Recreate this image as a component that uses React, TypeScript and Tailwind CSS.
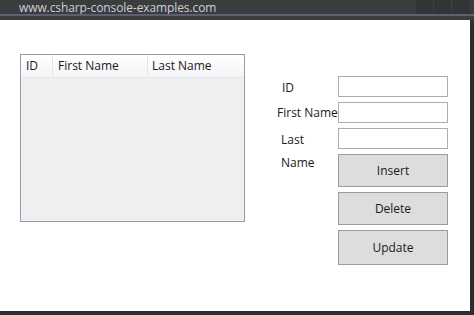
function App() {
  const font = { fontFamily: '"Open Sans", "Noto Sans", sans-serif' };

  return (
    <div
      className="w-[474px] h-[315px] bg-[#2d2e31] flex flex-col overflow-hidden text-[#1a1a1a]"
      style={font}
    >
      {/* title bar */}
      <div className="h-[20px] bg-[#3b3c40] flex flex-col shrink-0">
        <div className="h-[14px] flex items-start">
          <span className="pl-[19px] pt-[1px] text-[12px] leading-[14px] text-[#cfcfd2] tracking-[-0.1px]">
            www.csharp-console-examples.com
          </span>
          <div className="ml-auto flex h-[16px] mr-[4px]">
            <div className="w-[18px] bg-[#333438] border-r border-[#3f4044]"></div>
            <div className="w-[18px] bg-[#333438] border-r border-[#3f4044]"></div>
            <div className="w-[18px] bg-[#333438]"></div>
          </div>
        </div>
        <div className="h-[2px] bg-[#5b6172]"></div>
        <div className="flex-1 bg-[#3b3c40]"></div>
      </div>

      {/* window content */}
      <div className="flex-1 flex mr-[4px] mb-[4px] bg-white">
        {/* list view */}
        <div className="ml-[20px] mt-[34px] w-[225px] h-[168px] border border-[#8e9db0] bg-[#efefef] flex flex-col">
          <div className="h-[23px] flex bg-gradient-to-b from-white to-[#f4f5f7] border-b border-[#e3e6ea] text-[12px]">
            <div className="w-[32px] pl-[5px] leading-[22px] border-r border-[#e3e6ea]">ID</div>
            <div className="w-[95px] pl-[5px] leading-[22px] border-r border-[#e3e6ea]">First Name</div>
            <div className="flex-1 pl-[4px] leading-[22px]">Last Name</div>
          </div>
          <div className="flex-1"></div>
        </div>

        {/* form */}
        <div className="ml-[32px] mt-[56px] flex text-[12px]">
          <div className="w-[61px] flex flex-col">
            <div className="h-[21px] mb-[5px] pl-[5px] leading-[24px]">ID</div>
            <div className="h-[21px] mb-[5px] leading-[22px]">First Name</div>
            <div className="h-[21px] pl-[4px] leading-[23px]">Last Name</div>
          </div>
          <div className="w-[110px] flex flex-col">
            <div className="h-[21px] mb-[5px] border border-[#abadb3] bg-white"></div>
            <div className="h-[21px] mb-[5px] border border-[#abadb3] bg-white"></div>
            <div className="h-[21px] mb-[5px] border border-[#abadb3] bg-white"></div>
            <button className="h-[33px] mb-[5px] border border-[#9c9c9c] bg-[#dddddd] text-[12px]">Insert</button>
            <button className="h-[33px] mb-[5px] border border-[#9c9c9c] bg-[#dddddd] text-[12px]">Delete</button>
            <button className="h-[35px] border border-[#9c9c9c] bg-[#dddddd] text-[12px]">Update</button>
          </div>
        </div>
      </div>
    </div>
  );
}

export default App;
